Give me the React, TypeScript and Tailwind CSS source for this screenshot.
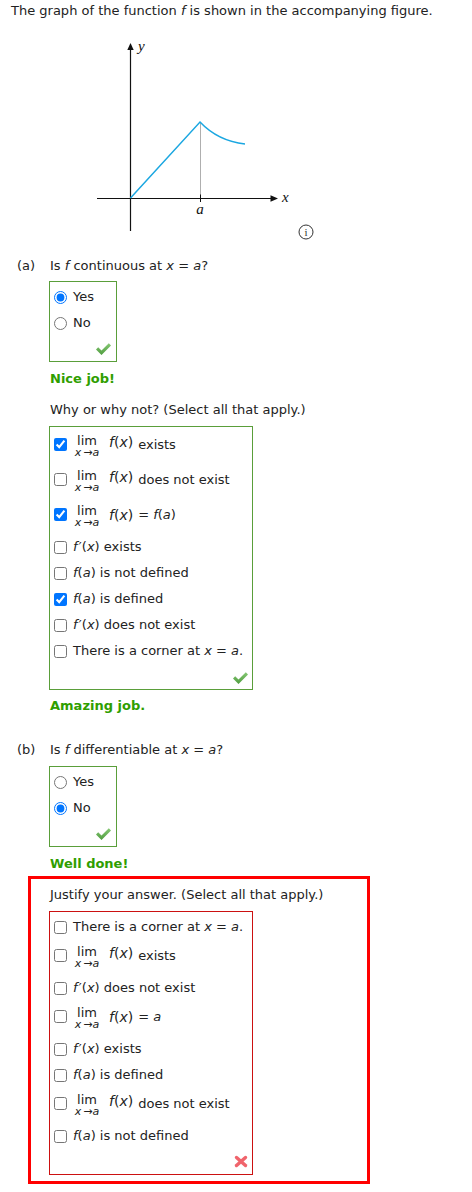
import React from 'react';

const Check: React.FC = () => (
    <svg width="15" height="12" viewBox="0 0 15 12">
        <defs>
            <linearGradient id="chk" x1="0" y1="0" x2="0" y2="1">
                <stop offset="0" stopColor="#86c874" />
                <stop offset="1" stopColor="#4f9c3f" />
            </linearGradient>
        </defs>
        <polygon points="0,6.5 2.2,4.3 5.5,7.6 12.8,0.3 15,2.5 5.5,12" fill="url(#chk)" />
    </svg>
);

const Cross: React.FC = () => (
    <svg width="14" height="13" viewBox="0 0 14 13">
        <g stroke="#f0646c" strokeWidth="3.4" strokeLinecap="round">
            <line x1="2.5" y1="2.5" x2="11.5" y2="10.5" />
            <line x1="11.5" y1="2.5" x2="2.5" y2="10.5" />
        </g>
    </svg>
);

const Fx: React.FC<{ v?: string }> = ({ v = 'x' }) => (
    <span>
        <i>f</i>(<i>{v}</i>)
    </span>
);

const Fp: React.FC = () => (
    <span>
        <i>f</i>&#8202;′(<i>x</i>)
    </span>
);

const Row: React.FC<{ checked?: boolean; children: React.ReactNode }> = ({ checked, children }) => (
    <label className="flex h-[26px] items-center gap-[6px]">
        <input type="checkbox" checked={!!checked} readOnly className="shrink-0" />
        <span className="leading-[16px]">{children}</span>
    </label>
);

// lim row: subscript under "lim", f(x) raised when followed by words
const LimRow: React.FC<{ checked?: boolean; raise?: boolean; tail: React.ReactNode }> = ({ checked, raise, tail }) => (
    <label className="flex h-[35px] items-start">
        <input type="checkbox" checked={!!checked} readOnly className="mt-[9px] shrink-0" />
        <span className="ml-[6px] mt-[5px] flex w-[28px] flex-col items-center">
            <span className="text-[13px] leading-[14px]">lim</span>
            <span className="text-[11px] leading-[10px] whitespace-nowrap">
                <i>x</i>&#8201;→<i>a</i>
            </span>
        </span>
        <span className={`ml-[8px] text-[14px] leading-[16px] ${raise ? 'mt-[5px]' : 'mt-[8px]'}`}>
            <Fx />
        </span>
        <span className="ml-[5px] mt-[8px] leading-[16px] whitespace-nowrap">{tail}</span>
    </label>
);

const RadioBox: React.FC<{ yes: boolean }> = ({ yes }) => (
    <div className="w-[68px] border border-[#5a9e3a] pt-[7px] pb-[6px] pl-[4px] pr-[5px]">
        <label className="flex h-[16px] items-center gap-[6px]">
            <input type="radio" checked={yes} readOnly />
            Yes
        </label>
        <label className="mt-[10px] flex h-[16px] items-center gap-[6px]">
            <input type="radio" checked={!yes} readOnly />
            No
        </label>
        <div className="mt-[12px] flex justify-end">
            <Check />
        </div>
    </div>
);

const Graph: React.FC = () => (
    <svg width="340" height="205" viewBox="0 38 340 205" className="mt-[19px] block">
        <line x1="130.5" y1="48" x2="130.5" y2="231" stroke="#111" strokeWidth="1.2" />
        <polygon points="130.5,43 127.3,50 133.7,50" fill="#111" />
        <line x1="97" y1="198.5" x2="272" y2="198.5" stroke="#111" strokeWidth="1.2" />
        <polygon points="278,198.5 270.5,195.3 270.5,201.7" fill="#111" />
        <line x1="200.5" y1="122" x2="200.5" y2="198" stroke="#9a9a9a" strokeWidth="0.8" />
        <line x1="200.5" y1="194.5" x2="200.5" y2="202" stroke="#111" strokeWidth="1" />
        <path d="M130.5 198 L200 122 Q218 141 245 144" fill="none" stroke="#1ba7e1" strokeWidth="1.5" />
        <text x="138" y="51" fontFamily="'Liberation Serif', serif" fontStyle="italic" fontSize="15" fill="#111">y</text>
        <text x="282" y="202" fontFamily="'Liberation Serif', serif" fontStyle="italic" fontSize="15" fill="#111">x</text>
        <text x="200" y="214" textAnchor="middle" fontFamily="'Liberation Serif', serif" fontStyle="italic" fontSize="15" fill="#111">a</text>
        <circle cx="306" cy="232" r="7" fill="none" stroke="#333" strokeWidth="1" />
        <text x="306" y="236" textAnchor="middle" fontFamily="'Liberation Serif', serif" fontSize="11" fill="#333">i</text>
    </svg>
);

const App: React.FC = () => {
    return (
        <div className="min-h-[1192px] w-[472px] bg-white font-['DejaVu_Sans',Verdana,sans-serif] text-[13px] text-[#222]">
            <p className="pt-[3px] pl-[11px] leading-[16px]">
                The graph of the function <i>f</i> is shown in the accompanying figure.
            </p>
            <Graph />

            {/* part (a) */}
            <div className="mt-[15px] flex pl-[17px] leading-[16px]">
                <span className="w-[33px]">(a)</span>
                <span>
                    Is <i>f</i> continuous at <i>x</i> = <i>a</i>?
                </span>
            </div>
            <div className="pl-[49px]">
                <div className="mt-[7px]">
                    <RadioBox yes />
                </div>
                <p className="mt-[9px] pl-[1px] font-bold leading-[16px] text-[#2f9e00]">Nice job!</p>
                <p className="mt-[15px] pl-[1px] leading-[16px]">Why or why not? (Select all that apply.)</p>
                <div className="mt-[8px] w-[204px] border border-[#5a9e3a] pt-[2px] pb-[5px] pl-[4px] pr-[4px]">
                    <LimRow checked raise tail="exists" />
                    <LimRow raise tail="does not exist" />
                    <LimRow
                        checked
                        tail={
                            <>
                                = <Fx v="a" />
                            </>
                        }
                    />
                    <Row>
                        <Fp /> exists
                    </Row>
                    <Row>
                        <Fx v="a" /> is not defined
                    </Row>
                    <Row checked>
                        <Fx v="a" /> is defined
                    </Row>
                    <Row>
                        <Fp /> does not exist
                    </Row>
                    <Row>
                        There is a corner at <i>x</i> = <i>a</i>.
                    </Row>
                    <div className="mt-[8px] flex justify-end">
                        <Check />
                    </div>
                </div>
                <p className="mt-[8px] pl-[1px] font-bold leading-[16px] text-[#2f9e00]">Amazing job.</p>
            </div>

            {/* part (b) */}
            <div className="mt-[28px] flex pl-[17px] leading-[16px]">
                <span className="w-[33px]">(b)</span>
                <span>
                    Is <i>f</i> differentiable at <i>x</i> = <i>a</i>?
                </span>
            </div>
            <div className="pl-[49px]">
                <div className="mt-[8px]">
                    <RadioBox yes={false} />
                </div>
                <p className="mt-[9px] pl-[1px] font-bold leading-[16px] text-[#2f9e00]">Well done!</p>
            </div>

            <div className="mt-[4px] ml-[28px] w-[342px] border-[3px] border-[#ff0000] pt-[8px] pb-[6px] pl-[18px]">
                <p className="pl-[1px] leading-[16px]">Justify your answer. (Select all that apply.)</p>
                <div className="mt-[8px] w-[204px] border border-[#cc1111] pt-[2px] pb-[6px] pl-[4px] pr-[4px]">
                    <Row>
                        There is a corner at <i>x</i> = <i>a</i>.
                    </Row>
                    <LimRow raise tail="exists" />
                    <Row>
                        <Fp /> does not exist
                    </Row>
                    <LimRow
                        tail={
                            <>
                                = <i>a</i>
                            </>
                        }
                    />
                    <Row>
                        <Fp /> exists
                    </Row>
                    <Row>
                        <Fx v="a" /> is defined
                    </Row>
                    <LimRow raise tail="does not exist" />
                    <Row>
                        <Fx v="a" /> is not defined
                    </Row>
                    <div className="mt-[6px] flex justify-end">
                        <Cross />
                    </div>
                </div>
            </div>
        </div>
    );
};

export default App;
